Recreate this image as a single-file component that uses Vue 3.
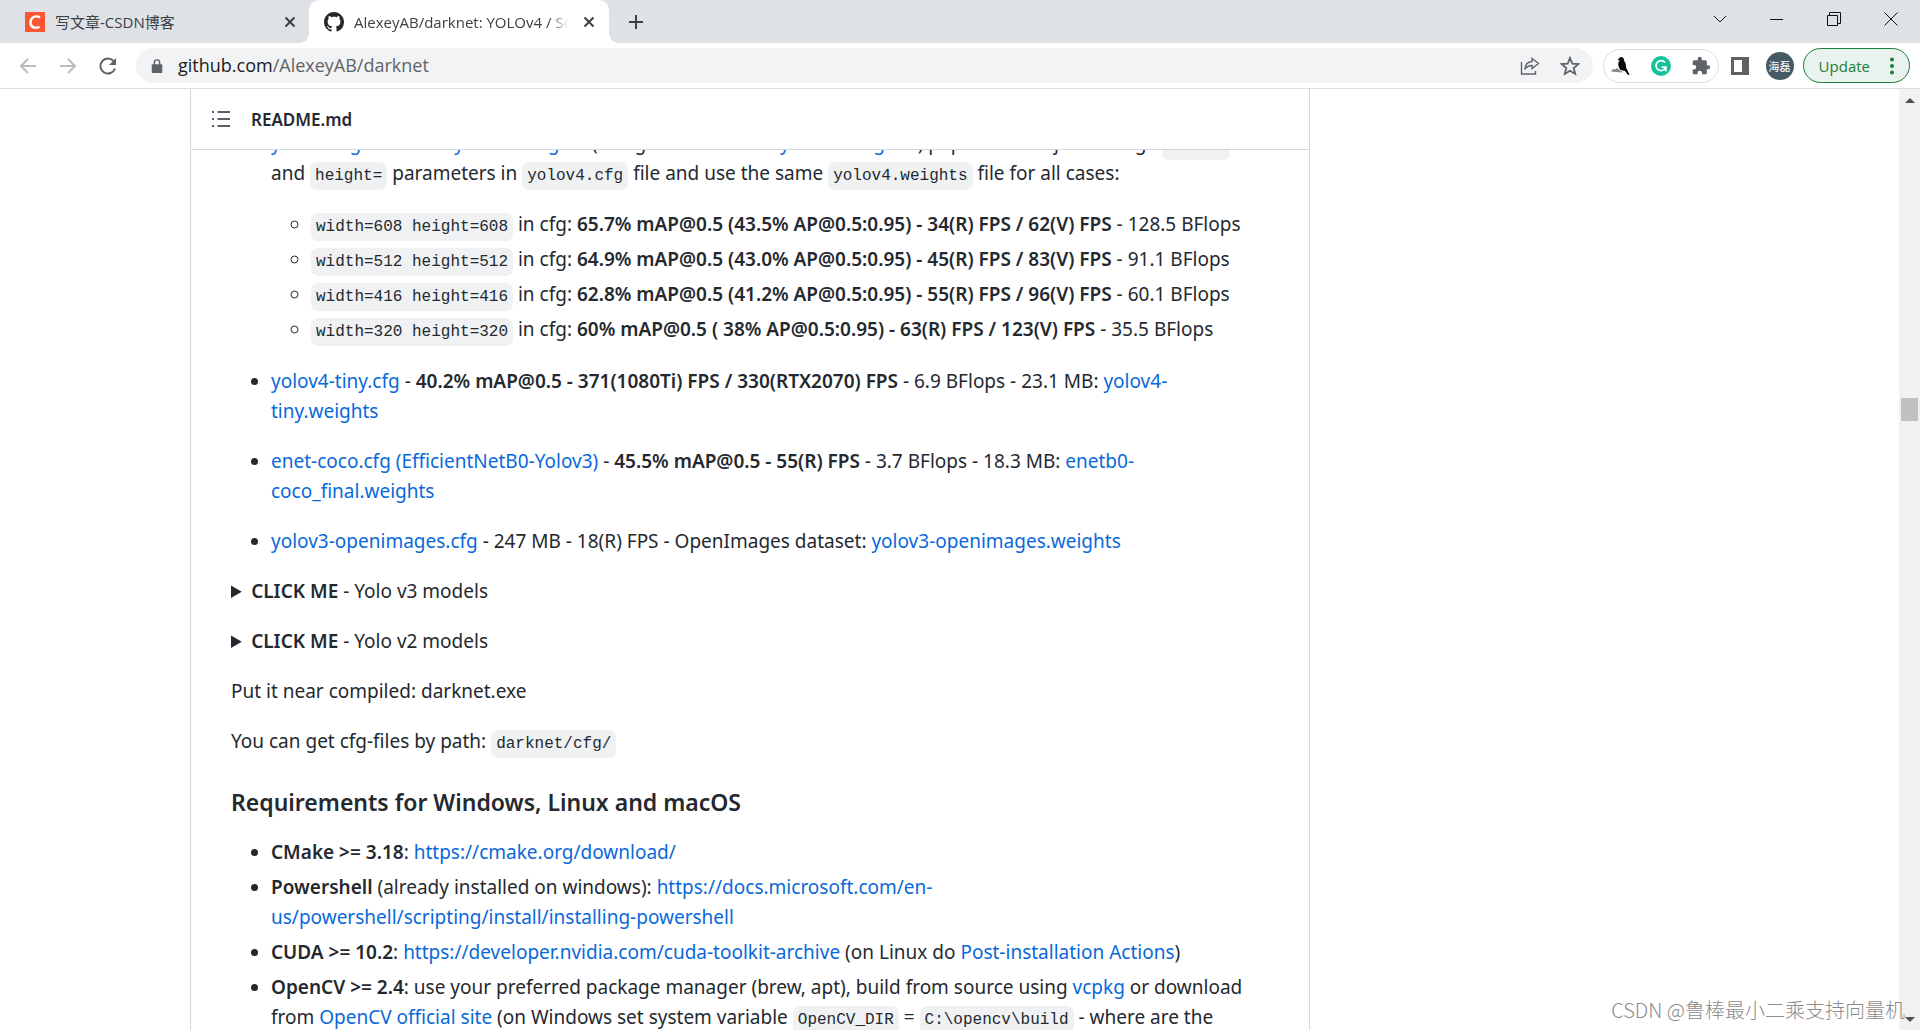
<script setup>
    // --------------------------------------------------------------------
    // BROWSER TABS
    // --------------------------------------------------------------------
    const tabs = [
        {title: "写文章-CSDN博客", icon: "csdn", active: false},
        {title: "AlexeyAB/darknet: YOLOv4 / Scaled-YOLOv4", icon: "github", active: true},
    ]

    // --------------------------------------------------------------------
    // YOLOV4 RESOLUTIONS
    // --------------------------------------------------------------------
    const resolutions = [
        {size: 608, stats: "65.7% mAP@0.5 (43.5% AP@0.5:0.95) - 34(R) FPS / 62(V) FPS", flops: "128.5"},
        {size: 512, stats: "64.9% mAP@0.5 (43.0% AP@0.5:0.95) - 45(R) FPS / 83(V) FPS", flops: "91.1"},
        {size: 416, stats: "62.8% mAP@0.5 (41.2% AP@0.5:0.95) - 55(R) FPS / 96(V) FPS", flops: "60.1"},
        {size: 320, stats: "60% mAP@0.5 ( 38% AP@0.5:0.95) - 63(R) FPS / 123(V) FPS", flops: "35.5"},
    ]

    const older = ["v3", "v2"]
</script>

<template>
    <div class="browser">
        <header>
            <div class="tabstrip">
                <div v-for="tab of tabs" class="tab" :class="{active: tab.active}">
                    <svg v-if="tab.icon == 'csdn'" class="favicon" viewBox="0 0 20 20">
                        <rect width="20" height="20" fill="#fc5531"/>
                        <path d="M15 5.400C10.500 3 6 5.300 5.500 10C5.100 15 9.500 17.200 14.600 14.800" fill="none" stroke="#fff" stroke-width="2.400"/>
                    </svg>
                    <svg v-else class="favicon" viewBox="0 0 16 16">
                        <path fill="#24292f" d="M8 0C3.58 0 0 3.58 0 8c0 3.54 2.29 6.53 5.47 7.59.4.07.55-.17.55-.38 0-.19-.01-.82-.01-1.490-2.010.370-2.530-.490-2.690-.940-.090-.230-.480-.940-.820-1.130-.280-.150-.680-.520-.010-.530.630-.010 1.080.580 1.230.820.720 1.210 1.870.870 2.330.660.070-.520.280-.870.510-1.070-1.780-.200-3.640-.890-3.640-3.950 0-.870.310-1.590.820-2.150-.080-.200-.360-1.020.080-2.120 0 0 .670-.210 2.200.820.640-.180 1.320-.270 2-.270s1.360.090 2 .270c1.530-1.040 2.200-.820 2.200-.820.440 1.100.160 1.920.080 2.120.510.560.820 1.270.820 2.150 0 3.070-1.870 3.750-3.650 3.950.290.250.540.730.540 1.480 0 1.070-.010 1.930-.010 2.200 0 .210.150.460.550.380A8.010 8.010 0 0 0 16 8c0-4.420-3.580-8-8-8z"/>
                    </svg>
                    <span class="title">{{ tab.title }}</span>
                    <button aria-label="Close tab">
                        <svg width="12" height="12" viewBox="0 0 12 12"><path d="M1.500 1.500l9 9m0-9l-9 9" stroke="#3c4043" stroke-width="2"/></svg>
                    </button>
                </div>
                <button class="new-tab" aria-label="New tab">
                    <svg width="16" height="16" viewBox="0 0 16 16"><path d="M8 1v14M1 8h14" stroke="#3c4043" stroke-width="2"/></svg>
                </button>
                <div class="window-buttons">
                    <button aria-label="Search tabs"><svg width="14" height="14" viewBox="0 0 14 14"><path d="M1 4l6 6 6-6"/></svg></button>
                    <button aria-label="Minimize"><svg width="14" height="14" viewBox="0 0 14 14"><path d="M0 7.500h13"/></svg></button>
                    <button aria-label="Restore"><svg width="14" height="14" viewBox="0 0 14 14"><path d="M.5 3.500h10v10h-10zM2.500 3v-2.500h11v11h-3"/></svg></button>
                    <button aria-label="Close"><svg width="14" height="14" viewBox="0 0 14 14"><path d="M.5.5l13 13m0-13l-13 13"/></svg></button>
                </div>
            </div>

            <div class="toolbar">
                <button class="nav" aria-label="Back"><svg width="20" height="20" viewBox="0 0 20 20"><path d="M18 10H3M10 3l-7 7 7 7" fill="none" stroke="#babcbe" stroke-width="2"/></svg></button>
                <button class="nav" aria-label="Forward"><svg width="20" height="20" viewBox="0 0 20 20"><path d="M2 10h15M10 3l7 7-7 7" fill="none" stroke="#babcbe" stroke-width="2"/></svg></button>
                <button class="nav" aria-label="Reload"><svg width="20" height="20" viewBox="0 0 20 20"><path d="M17 12.500A7.500 7.500 0 1 1 15.500 5" fill="none" stroke="#5f6368" stroke-width="2"/><path d="M18 2v7h-7z" fill="#5f6368"/></svg></button>
                <div class="address">
                    <svg width="12" height="14" viewBox="0 0 12 16"><path d="M1 6h10q1 0 1 1v8q0 1-1 1H1q-1 0-1-1V7q0-1 1-1z" fill="#5f6368"/><path d="M3 7V4a3 3 0 0 1 6 0v3" fill="none" stroke="#5f6368" stroke-width="1.600"/></svg>
                    <a class="url" href="#"><span>github.com</span>/AlexeyAB/darknet</a>
                    <button aria-label="Share"><svg width="20" height="20" viewBox="0 0 20 20"><path d="M1.500 6v12h14v-3M12 2.500l6.500 5L12 12.500v-3c-3.500 0-5.500 1-7 4C5 8.500 8 5.800 12 5.500z" fill="none" stroke="#5f6368" stroke-width="1.400"/></svg></button>
                    <button aria-label="Bookmark"><svg width="20" height="20" viewBox="0 0 20 20"><path d="M10 2l2.300 5.600 6 .5-4.600 3.900 1.500 5.900L10 14.700l-5.200 3.200 1.500-5.900L1.700 8.100l6-.5z" fill="none" stroke="#5f6368" stroke-width="1.800"/></svg></button>
                </div>
                <div class="extensions">
                    <button aria-label="Bird extension"><svg width="20" height="20" viewBox="0 0 20 20"><path d="M8 2.500Q10 0 12.500 2l.5 2.500q2.500 3 2 7l3.500 7-1.500.500-3-4-4.500-1q-3-3.500-2-8l1.500-1.500-2.500-.5z" fill="#080808"/><path d="M0 15.500l2-2.500 2 .5 2-1.500 3 2.500 3 1.500-1 .5z" fill="#888"/></svg></button>
                    <button aria-label="Grammarly"><svg width="20" height="20" viewBox="0 0 20 20"><circle cx="10" cy="10" r="10" fill="#15c39a"/><path d="M14 6.500A5 5 0 1 0 14.500 12M10.500 11.200h4.500v4" fill="none" stroke="#fff" stroke-width="1.700"/></svg></button>
                    <button aria-label="Extensions"><svg width="20" height="20" viewBox="0 0 24 24"><path fill="#5f6368" d="M20.500 11H19V7c0-1.100-.900-2-2-2h-4V3.500a2.500 2.500 0 0 0-5 0V5H4c-1.100 0-2 .900-2 2v3.800h1.500a2.700 2.700 0 0 1 0 5.400H2V20c0 1.100.900 2 2 2h3.800v-1.500a2.700 2.700 0 0 1 5.400 0V22H17c1.100 0 2-.900 2-2v-4h1.500a2.500 2.500 0 0 0 0-5z"/></svg></button>
                </div>
                <button class="side-panel" aria-label="Side panel"><svg width="18" height="18" viewBox="0 0 18 18"><path d="M0 0h18v18H0zM3 3v12h8V3z" fill="#5f6368" fill-rule="evenodd"/></svg></button>
                <button class="avatar">海磊</button>
                <button class="update">Update<svg width="4" height="18" viewBox="0 0 4 18"><circle cx="2" cy="2.500" r="2"/><circle cx="2" cy="9" r="2"/><circle cx="2" cy="15.500" r="2"/></svg></button>
            </div>
        </header>

        <div class="page">
            <main>
                <div class="readme-header">
                    <button aria-label="Table of contents">
                        <svg width="20" height="20" viewBox="0 0 20 20"><path d="M6.500 3H19M6.500 10H19M6.500 17H19M1 3h2M1 10h2M1 17h2" stroke="#57606a" stroke-width="1.800"/></svg>
                    </button>
                    <h2>README.md</h2>
                </div>
                <div class="viewport">
                    <article>
                        <ul class="models">
                            <li>
                                <p>
                                    <a href="#">yolov4.cfg</a> - 245 MB: <a href="#">yolov4.weights</a> (Google-drive mirror <a href="#">yolov4.weights</a> ) paper <a href="#">Yolo v4</a> just change <code>width=</code><br>
                                    and <code>height=</code> parameters in <code>yolov4.cfg</code> file and use the same <code>yolov4.weights</code> file for all cases:
                                </p>
                                <ul>
                                    <li v-for="r of resolutions">
                                        <code>width={{ r.size }} height={{ r.size }}</code> in cfg: <strong>{{ r.stats }}</strong> - {{ r.flops }} BFlops
                                    </li>
                                </ul>
                            </li>
                            <li>
                                <p><a href="#">yolov4-tiny.cfg</a> - <strong>40.2% mAP@0.5 - 371(1080Ti) FPS / 330(RTX2070) FPS</strong> - 6.9 BFlops - 23.1 MB: <a href="#">yolov4-<br>tiny.weights</a></p>
                            </li>
                            <li>
                                <p><a href="#">enet-coco.cfg (EfficientNetB0-Yolov3)</a> - <strong>45.5% mAP@0.5 - 55(R) FPS</strong> - 3.7 BFlops - 18.3 MB: <a href="#">enetb0-<br>coco_final.weights</a></p>
                            </li>
                            <li>
                                <p><a href="#">yolov3-openimages.cfg</a> - 247 MB - 18(R) FPS - OpenImages dataset: <a href="#">yolov3-openimages.weights</a></p>
                            </li>
                        </ul>
                        <details v-for="version of older">
                            <summary><strong>CLICK ME</strong> - Yolo {{ version }} models</summary>
                        </details>
                        <p>Put it near compiled: darknet.exe</p>
                        <p>You can get cfg-files by path: <code>darknet/cfg/</code></p>
                        <h3>Requirements for Windows, Linux and macOS</h3>
                        <ul>
                            <li><strong>CMake &gt;= 3.18</strong>: <a href="#">https://cmake.org/download/</a></li>
                            <li><strong>Powershell</strong> (already installed on windows): <a href="#">https://docs.microsoft.com/en-<br>us/powershell/scripting/install/installing-powershell</a></li>
                            <li><strong>CUDA &gt;= 10.2</strong>: <a href="#">https://developer.nvidia.com/cuda-toolkit-archive</a> (on Linux do <a href="#">Post-installation Actions</a>)</li>
                            <li>
                                <strong>OpenCV &gt;= 2.4</strong>: use your preferred package manager (brew, apt), build from source using <a href="#">vcpkg</a> or download<br>
                                from <a href="#">OpenCV official site</a> (on Windows set system variable <code>OpenCV_DIR</code> = <code>C:\opencv\build</code> - where are the
                            </li>
                        </ul>
                    </article>
                </div>
            </main>
            <div class="scrollbar">
                <svg width="10" height="5" viewBox="0 0 10 5"><path d="M0 5l5-5 5 5z"/></svg>
                <div class="thumb"></div>
                <svg width="10" height="5" viewBox="0 0 10 5"><path d="M0 0l5 5 5-5z"/></svg>
            </div>
            <div class="watermark">CSDN @鲁棒最小二乘支持向量机</div>
        </div>
    </div>
</template>

<style>
body {
    margin: 0;
    overflow: hidden;
}
</style>

<style scoped>
.browser {
    display: flex;
    flex-direction: column;
    height: 100vh;
    background: #fff;
    color: #24292f;
    font-family: "Noto Sans", "Noto Sans CJK SC", sans-serif;
    font-size: 19px;
}
button {
    display: flex;
    align-items: center;
    justify-content: center;
    padding: 0;
    border: 0;
    background: none;
    font-family: inherit;
}
a {
    color: #0969da;
    text-decoration: none;
}

/* tabs */
.tabstrip {
    display: flex;
    height: 43px;
    background: #dee1e6;
}
.tab {
    display: flex;
    align-items: center;
    box-sizing: border-box;
    width: 309px;
    padding: 0 13px 0 25px;
    color: #3c4043;
    font-family: "Open Sans", "Noto Sans CJK SC", sans-serif;
    font-size: 15px;
}
.tab.active {
    position: relative;
    width: 300px;
    padding-left: 15px;
    padding-right: 14px;
    border-radius: 10px 10px 0 0;
    background: #fff;
}
.tab.active::before, .tab.active::after {
    content: "";
    position: absolute;
    bottom: 0;
    width: 10px;
    height: 10px;
}
.tab.active::before {
    right: 100%;
    background: radial-gradient(circle at 0 0, transparent 10px, #fff 10px);
}
.tab.active::after {
    left: 100%;
    background: radial-gradient(circle at 100% 0, transparent 10px, #fff 10px);
}
.favicon {
    flex: none;
    width: 20px;
    height: 20px;
}
.title {
    flex: 1;
    margin: 0 10px;
    overflow: hidden;
    white-space: nowrap;
}
.active .title {
    mask-image: linear-gradient(to left, transparent 4px, #000 24px);
}
.new-tab {
    width: 54px;
}
.window-buttons {
    display: flex;
    height: 37px;
    margin-left: auto;
    padding-right: 1px;
}
.window-buttons button {
    width: 57px;
}
.window-buttons path {
    fill: none;
    stroke: #111;
}

/* toolbar */
.toolbar {
    display: flex;
    align-items: center;
    height: 45px;
    padding: 0 10px 0 8px;
    border-bottom: 1px solid #dadce0;
}
.nav {
    width: 40px;
}
.address {
    display: flex;
    flex: 1;
    align-items: center;
    height: 35px;
    margin-left: 8px;
    padding: 0 13px 0 15px;
    border-radius: 18px;
    background: #f1f3f4;
}
.address button {
    margin-left: 20px;
}
.url {
    flex: 1;
    margin-left: 15px;
    padding-bottom: 2px;
    color: #5f6368;
    font-family: "Open Sans", sans-serif;
    font-size: 18px;
}
.url span {
    color: #202124;
}
.extensions {
    display: flex;
    align-items: center;
    gap: 20px;
    height: 32px;
    margin: 0 12px 0 10px;
    padding: 0 7px;
    border: 1px solid #dadce0;
    border-radius: 18px;
}
.avatar {
    width: 28px;
    height: 28px;
    margin: 0 9px 0 17px;
    border-radius: 50%;
    background: #455a64;
    color: #fff;
    font-size: 11px;
}
.update {
    gap: 20px;
    height: 35px;
    padding: 0 15px;
    border: 1px solid #188038;
    border-radius: 18px;
    background: #e9f2ee;
    color: #188038;
    font-family: "Open Sans", sans-serif;
    font-size: 15px;
}
.update svg {
    fill: #188038;
}

/* page */
.page {
    position: relative;
    display: flex;
    flex: 1;
    min-height: 0;
}
main {
    display: flex;
    flex-direction: column;
    box-sizing: border-box;
    width: 1120px;
    margin: 0 auto 0 190px;
    border: 1px solid #d0d7de;
    border-width: 0 1px;
}
.readme-header {
    display: flex;
    align-items: center;
    gap: 20px;
    height: 60px;
    padding: 0 20px;
    border-bottom: 1px solid #d0d7de;
}
h2 {
    margin: 0;
    font-size: 17px;
    font-weight: 600;
}
/* the article is scrolled, its first line runs under the header */
.viewport {
    display: flex;
    flex: 1;
    flex-direction: column;
    min-height: 0;
    overflow: hidden;
}
article {
    margin-top: -22px;
    padding: 0 40px;
    line-height: 30px;
    white-space: nowrap;
}
p, details, ul {
    margin: 0 0 20px;
}
ul {
    padding-left: 40px;
}
li + li {
    margin-top: 5px;
}
.models > li + li {
    margin-top: 20px;
}
li > ul {
    margin-bottom: 0;
    padding-top: 1px;
    padding-bottom: 2px;
}
strong {
    font-weight: 600;
}
code {
    padding: 5px;
    border-radius: 7px;
    background: #eff1f3;
    font-family: "Liberation Mono", monospace;
    font-size: 16px;
    line-height: 20px;
}
h3 {
    margin: 31px 0 20px;
    font-size: 23px;
    font-weight: 600;
}

/* scrollbar */
.scrollbar {
    display: flex;
    flex-direction: column;
    align-items: center;
    width: 21px;
    padding: 9px 0 8px;
    box-sizing: border-box;
    background: #f1f1f1;
}
.scrollbar svg {
    fill: #505050;
}
.thumb {
    width: 17px;
    height: 23px;
    margin: 295px 0 auto;
    background: #c1c1c1;
}
.watermark {
    position: absolute;
    right: 15px;
    bottom: 6px;
    color: #8c8c8c;
    font-family: "Noto Sans CJK SC", sans-serif;
    font-size: 20px;
    font-weight: 300;
}
</style>
